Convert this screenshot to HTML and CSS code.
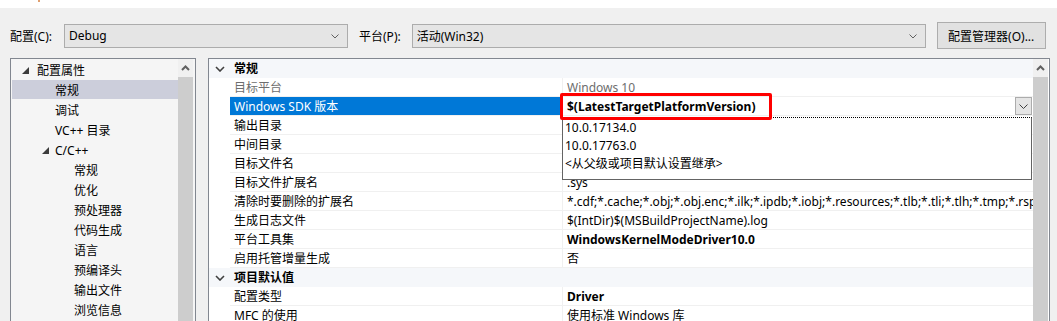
FILE: index.html
```html
<!DOCTYPE html>
<html>
<head>
    <title>属性页</title>
    <link rel="stylesheet" href="styles.css">
</head>
<body>

    <div class="titlebar"><span class="title-mark"></span></div>

    <div class="toolbar">
        <span class="tb-label">配置(C):</span>
        <div class="combo combo-config">
            <span>Debug</span>
            <svg class="combo-arrow" width="8" height="5" viewBox="0 0 8 5"><polyline points="0.5,0.5 4,4 7.5,0.5" fill="none" stroke="#606060" stroke-width="1"/></svg>
        </div>
        <span class="tb-label">平台(P):</span>
        <div class="combo combo-platform">
            <span>活动(Win32)</span>
            <svg class="combo-arrow" width="8" height="5" viewBox="0 0 8 5"><polyline points="0.5,0.5 4,4 7.5,0.5" fill="none" stroke="#606060" stroke-width="1"/></svg>
        </div>
        <button class="manager-btn">配置管理器(O)...</button>
    </div>

    <div class="main">
        <!-- 左侧树 -->
        <div class="tree">
            <ul class="tree-list">
                <li class="lvl0"><svg class="tri" width="7" height="7" viewBox="0 0 7 7"><polygon points="7,0 7,7 0,7" fill="#3c3c3c"/></svg>配置属性</li>
                <li class="lvl1 selected">常规</li>
                <li class="lvl1">调试</li>
                <li class="lvl1">VC++ 目录</li>
                <li class="lvl1 has-child"><svg class="tri" width="7" height="7" viewBox="0 0 7 7"><polygon points="7,0 7,7 0,7" fill="#3c3c3c"/></svg>C/C++</li>
                <li class="lvl2">常规</li>
                <li class="lvl2">优化</li>
                <li class="lvl2">预处理器</li>
                <li class="lvl2">代码生成</li>
                <li class="lvl2">语言</li>
                <li class="lvl2">预编译头</li>
                <li class="lvl2">输出文件</li>
                <li class="lvl2">浏览信息</li>
            </ul>
            <div class="vscroll">
                <div class="vs-arrow"><svg width="9" height="6" viewBox="0 0 9 6"><polyline points="1,5 4.5,1.5 8,5" fill="none" stroke="#606060" stroke-width="2"/></svg></div>
                <div class="vs-thumb"></div>
            </div>
        </div>

        <!-- 属性网格 -->
        <div class="grid">
            <div class="grid-body">
                <div class="row category">
                    <div class="gutter"><svg width="10" height="6" viewBox="0 0 10 6"><polyline points="1,1 5,5 9,1" fill="none" stroke="#404040" stroke-width="1.6"/></svg></div>
                    <div class="cat-name">常规</div>
                </div>
                <div class="row disabled">
                    <div class="gutter"></div>
                    <div class="name">目标平台</div>
                    <div class="value">Windows 10</div>
                </div>
                <div class="row active">
                    <div class="gutter"></div>
                    <div class="name">Windows SDK 版本</div>
                    <div class="value bold">$(LatestTargetPlatformVersion)
                        <span class="drop-btn"><svg width="9" height="5" viewBox="0 0 9 5"><polyline points="0.5,0.5 4.5,4.5 8.5,0.5" fill="none" stroke="#404040" stroke-width="1"/></svg></span>
                    </div>
                </div>
                <div class="row"><div class="gutter"></div><div class="name">输出目录</div><div class="value"></div></div>
                <div class="row"><div class="gutter"></div><div class="name">中间目录</div><div class="value"></div></div>
                <div class="row"><div class="gutter"></div><div class="name">目标文件名</div><div class="value"></div></div>
                <div class="row"><div class="gutter"></div><div class="name">目标文件扩展名</div><div class="value">.sys</div></div>
                <div class="row"><div class="gutter"></div><div class="name">清除时要删除的扩展名</div><div class="value">*.cdf;*.cache;*.obj;*.obj.enc;*.ilk;*.ipdb;*.iobj;*.resources;*.tlb;*.tli;*.tlh;*.tmp;*.rsp;*.pgc;*.pgd;*.meta;*.tlog;*.manifest;*.res</div></div>
                <div class="row"><div class="gutter"></div><div class="name">生成日志文件</div><div class="value">$(IntDir)$(MSBuildProjectName).log</div></div>
                <div class="row"><div class="gutter"></div><div class="name">平台工具集</div><div class="value bold">WindowsKernelModeDriver10.0</div></div>
                <div class="row"><div class="gutter"></div><div class="name">启用托管增量生成</div><div class="value">否</div></div>
                <div class="row category">
                    <div class="gutter"><svg width="10" height="6" viewBox="0 0 10 6"><polyline points="1,1 5,5 9,1" fill="none" stroke="#404040" stroke-width="1.6"/></svg></div>
                    <div class="cat-name">项目默认值</div>
                </div>
                <div class="row"><div class="gutter"></div><div class="name">配置类型</div><div class="value bold">Driver</div></div>
                <div class="row"><div class="gutter"></div><div class="name">MFC 的使用</div><div class="value">使用标准 Windows 库</div></div>
            </div>
            <div class="vscroll">
                <div class="vs-arrow"><svg width="9" height="6" viewBox="0 0 9 6"><polyline points="1,5 4.5,1.5 8,5" fill="none" stroke="#606060" stroke-width="2"/></svg></div>
                <div class="vs-thumb"></div>
            </div>

            <!-- 下拉列表 -->
            <ul class="drop-list">
                <li>10.0.17134.0</li>
                <li>10.0.17763.0</li>
                <li>&lt;从父级或项目默认设置继承&gt;</li>
            </ul>
            <div class="mark-box"></div>
        </div>
    </div>

</body>
</html>
```

FILE: styles.css
```css
body {
    margin: 0;
    background-color: #f0f0f0;
    font-family: "Noto Sans", "Noto Sans CJK SC", sans-serif;
    font-size: 12px;
    color: #000;
    overflow: hidden;
    height: 321px;
}

.titlebar {
    height: 8px;
    background-color: #fff;
}

.title-mark {
    display: inline-block;
    width: 2px;
    height: 2px;
    margin-left: 38px;
    vertical-align: top;
    background-color: #e0a070;
}

/* 工具栏 */
.toolbar {
    box-sizing: border-box;
    height: 50px;
    padding: 5px 0 0 10px;
    display: flex;
    align-items: center;
}

.toolbar > * {
    flex: none;
}

.combo {
    box-sizing: border-box;
    height: 24px;
    background-color: #e5e5e5;
    border: 1px solid #acacac;
    display: flex;
    align-items: center;
    justify-content: space-between;
    padding: 0 8px 0 4px;
}

.combo-config {
    width: 284px;
    margin: 0 11px 0 12px;
}

.combo-platform {
    width: 514px;
    margin: 0 11px 0 11px;
}

.combo-arrow {
    margin-top: 1px;
}

.manager-btn {
    box-sizing: border-box;
    width: 109px;
    height: 27px;
    background-color: #e1e1e1;
    border: 1px solid #adadad;
    font-family: inherit;
    font-size: 12px;
    padding: 0;
    color: #000;
}

/* 主区域 */
.main {
    display: flex;
    gap: 12px;
    padding-left: 10px;
    height: 280px;
}

.tree {
    box-sizing: border-box;
    width: 186px;
    height: 100%;
    background-color: #f5f5f5;
    border: 1px solid #828790;
    border-bottom: none;
    display: flex;
    padding-right: 1px;
}

.tree-list {
    list-style: none;
    margin: 0;
    padding: 0 0 0 1px;
    width: 166px;
}

.tree-list li {
    box-sizing: border-box;
    height: 20px;
    padding-top: 2px;
    white-space: nowrap;
    display: flex;
    align-items: center;
}

.tree-list .lvl0 {
    padding-left: 25px;
}

.tree-list .lvl1 {
    padding-left: 43px;
}

.tree-list .lvl1.has-child {
    padding-left: 30px;
}

.tree-list .lvl2 {
    padding-left: 62px;
}

.tree-list .tri {
    margin-right: 6px;
}

.tree-list .lvl0 .tri {
    margin-left: -15px;
    margin-right: 8px;
}

.tree-list .selected {
    background-color: #cccedb;
    margin-top: 1px;
    height: 19px;
    padding-top: 1px;
}

.vscroll {
    width: 15px;
    height: 100%;
    background-color: #f0f0f0;
    display: flex;
    flex-direction: column;
}

.vs-arrow {
    height: 18px;
    display: flex;
    align-items: center;
    justify-content: center;
}

.vs-thumb {
    flex: 1;
    background-color: #cdcdcd;
}

/* 属性网格 */
.grid {
    position: relative;
    box-sizing: border-box;
    width: 842px;
    height: 100%;
    background-color: #fff;
    border: 1px solid #828790;
    border-bottom: none;
    display: flex;
}

.grid-body {
    width: 824px;
    overflow: hidden;
}

.row {
    display: flex;
    height: 19px;
    line-height: 20px;
    white-space: nowrap;
}

.gutter {
    width: 21px;
    flex: none;
    display: flex;
    align-items: center;
    justify-content: center;
}

.name,
.value {
    box-sizing: border-box;
    height: 19px;
    flex: none;
    padding-left: 4px;
    overflow: hidden;
    border-bottom: 1px solid #f0f0f0;
}

.name {
    width: 332px;
}

.value {
    width: 471px;
    border-left: 1px solid #f0f0f0;
    display: flex;
    justify-content: space-between;
}

.value.bold {
    font-weight: bold;
}

.category {
    background-color: #f5f7fa;
}

.cat-name {
    padding-left: 4px;
    font-weight: bold;
}

.disabled .name,
.disabled .value {
    color: #6d6d6d;
}

.active .name {
    background-color: #0078d7;
    color: #fff;
}

.drop-btn {
    box-sizing: border-box;
    width: 17px;
    height: 18px;
    margin-right: 1px;
    background-color: #e5e5e5;
    border: 1px solid #acacac;
    display: flex;
    align-items: center;
    justify-content: center;
    flex: none;
}

.drop-list {
    position: absolute;
    left: 353px;
    top: 58px;
    box-sizing: border-box;
    width: 470px;
    height: 63px;
    margin: 0;
    padding: 0;
    list-style: none;
    background-color: #fff;
    border: 1px solid #646464;
    border-top: 1px dotted #000;
}

.drop-list li {
    height: 18px;
    line-height: 19px;
    padding-left: 2px;
}

.mark-box {
    position: absolute;
    left: 351px;
    top: 34px;
    box-sizing: border-box;
    width: 212px;
    height: 27px;
    border: 3px solid #f00;
    border-radius: 2px;
}
```
